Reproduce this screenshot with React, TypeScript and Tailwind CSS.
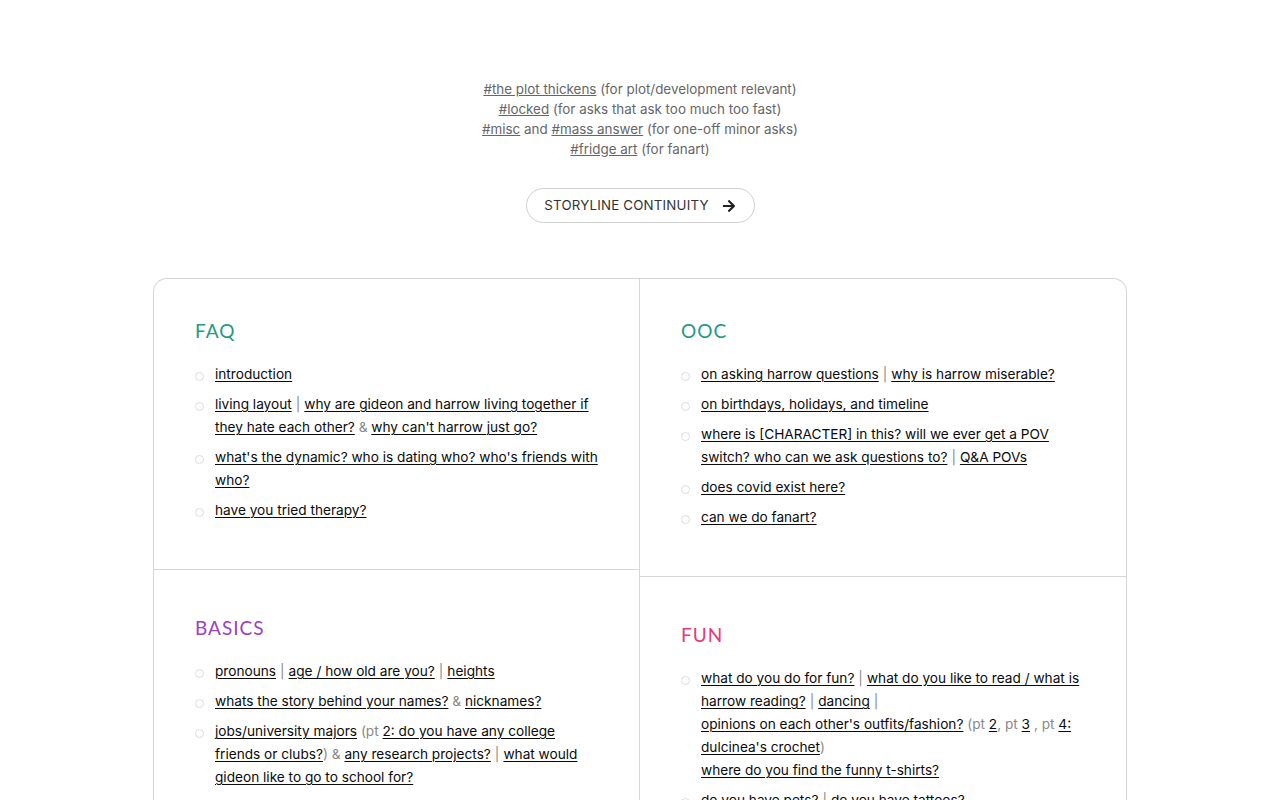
import React from "react";
import { FaArrowRight } from "react-icons/fa";

const L = ({ children }: { children: React.ReactNode }) => (
  <a href="#" className="underline underline-offset-[2px] decoration-1 text-[#0a0a0a]">
    {children}
  </a>
);
const P = () => <span className="text-[#8a8a8a] mx-[4px]">|</span>;
const G = ({ children }: { children: React.ReactNode }) => (
  <span className="text-[#888]">{children}</span>
);

const Item = ({ children }: { children: React.ReactNode }) => (
  <li className="flex items-start gap-[11px]">
    <span className="mt-[9px] shrink-0 w-[9px] h-[9px] rounded-full border-[1.5px] border-[#ddd]" />
    <div>{children}</div>
  </li>
);

const Card = ({
  title,
  color,
  pt,
  border,
  children,
}: {
  title: string;
  color: string;
  pt: string;
  border?: boolean;
  children: React.ReactNode;
}) => (
  <section className={`${pt} pb-[47px] pl-[41px] pr-[40px] ${border ? "border-t border-[#d6d6d6]" : ""}`}>
    <h2
      className={`${color} text-[19px] leading-[26px] tracking-[1px] mb-[19px]`}
      style={{ fontFamily: "Lato, 'Open Sans', sans-serif" }}
    >
      {title}
    </h2>
    <ul className="flex flex-col gap-[7px] text-[13.65px] leading-[23px] text-[#111]">{children}</ul>
  </section>
);

export default function App() {
  return (
    <div className="min-h-screen bg-white pb-20" style={{ fontFamily: "Inter, 'Liberation Sans', sans-serif" }}>
      <div className="pt-[79px] text-center text-[13.4px] leading-[20px] text-[#666]">
        <p>
          <a href="#" className="underline">#the plot thickens</a> (for plot/development relevant)
        </p>
        <p>
          <a href="#" className="underline">#locked</a> (for asks that ask too much too fast)
        </p>
        <p>
          <a href="#" className="underline">#misc</a> and <a href="#" className="underline">#mass answer</a> (for one-off minor asks)
        </p>
        <p>
          <a href="#" className="underline">#fridge art</a> (for fanart)
        </p>
      </div>

      <div className="flex justify-center mt-[29px]">
        <button className="h-[35px] w-[229px] rounded-full border border-[#d0d0d0] flex items-center justify-center gap-[13px] text-[13.3px] tracking-[0.2px] text-[#333] uppercase">
          <span>Storyline Continuity</span>
          <FaArrowRight className="w-[14px] h-[14px] text-[#222]" />
        </button>
      </div>

      <div className="mt-[55px] mx-auto w-[974px] border-t border-l border-r border-[#d6d6d6] rounded-t-[14px] flex">
        <div className="w-[487px] border-r border-[#d6d6d6]">
          <Card title="FAQ" color="text-[#239a7f]" pt="pt-[39px]">
            <Item>
              <L>introduction</L>
            </Item>
            <Item>
              <L>living layout</L>
              <P />
              <L>why are gideon and harrow living together if they hate each other?</L> <G>&amp;</G>{" "}
              <L>why can't harrow just go?</L>
            </Item>
            <Item>
              <L>what's the dynamic? who is dating who? who's friends with who?</L>
            </Item>
            <Item>
              <L>have you tried therapy?</L>
            </Item>
          </Card>
          <Card title="BASICS" color="text-[#9b41c3]" pt="pt-[45px]" border>
            <Item>
              <L>pronouns</L>
              <P />
              <L>age / how old are you?</L>
              <P />
              <L>heights</L>
            </Item>
            <Item>
              <L>whats the story behind your names?</L> <G>&amp;</G> <L>nicknames?</L>
            </Item>
            <Item>
              <L>jobs/university majors</L> <G>(pt</G>{" "}
              <L>2: do you have any college friends or clubs?</L>
              <G>)</G> <G>&amp;</G> <L>any research projects?</L>
              <P />
              <L>what would gideon like to go to school for?</L>
            </Item>
            <Item>
              <L>where did you grow up?</L>
            </Item>
          </Card>
        </div>
        <div className="w-[487px]">
          <Card title="OOC" color="text-[#239a7f]" pt="pt-[39px]">
            <Item>
              <L>on asking harrow questions</L>
              <P />
              <L>why is harrow miserable?</L>
            </Item>
            <Item>
              <L>on birthdays, holidays, and timeline</L>
            </Item>
            <Item>
              <L>where is [CHARACTER] in this? will we ever get a POV switch? who can we ask questions to?</L>
              <P />
              <L>Q&amp;A POVs</L>
            </Item>
            <Item>
              <L>does covid exist here?</L>
            </Item>
            <Item>
              <L>can we do fanart?</L>
            </Item>
          </Card>
          <Card title="FUN" color="text-[#e33b7b]" pt="pt-[45px]" border>
            <Item>
              <L>what do you do for fun?</L>
              <P />
              <L>what do you like to read / what is harrow reading?</L>
              <P />
              <L>dancing</L>
              <P />
              <br />
              <L>opinions on each other's outfits/fashion?</L> <G>(pt</G> <L>2</L>
              <G>, pt</G> <L>3</L> <G>, pt</G> <L>4: dulcinea's crochet</L>
              <G>)</G>
              <br />
              <L>where do you find the funny t-shirts?</L>
            </Item>
            <Item>
              <L>do you have pets?</L>
              <P />
              <L>do you have tattoos?</L>
            </Item>
          </Card>
        </div>
      </div>
    </div>
  );
}
